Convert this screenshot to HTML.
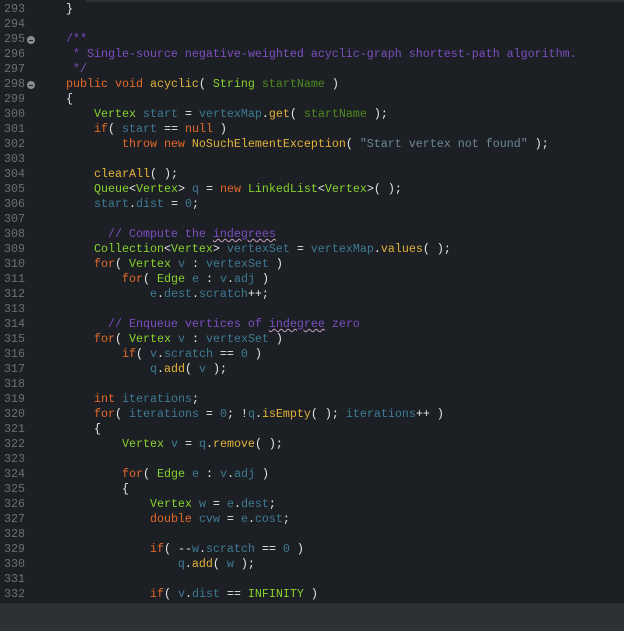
<!DOCTYPE html>
<html><head><meta charset="utf-8"><style>
html,body{margin:0;padding:0;width:624px;height:631px;overflow:hidden;background:#1c1f23;}
.top{position:absolute;left:86px;top:0;width:538px;height:2px;background:#2e3236;}
.bot{position:absolute;left:0;top:603px;width:624px;height:28px;background:#2d3135;}
.code{position:absolute;left:0;top:2px;width:624px;font-family:"Liberation Mono",monospace;font-size:11.67px;line-height:15px;color:#e6e6e6;}
.l{height:15px;position:relative;}
.n{position:absolute;left:4px;width:24px;color:#6b6f74;}
.c{position:absolute;left:66px;white-space:pre;}
.f{position:absolute;left:27px;top:4px;width:8px;height:8px;border-radius:50%;background:#8a8d90;}
.f:after{content:"";position:absolute;left:2px;top:3.5px;width:4px;height:1px;background:#1c1f23;}
.k{color:#e4692a}.t{color:#88d22e}.v{color:#3f7a94}.m{color:#e3b23a}.cm{color:#7c4fc0}.s{color:#6f8796}.p{color:#4f8a1e}
.u{text-decoration:underline wavy #c9a0c0;text-decoration-thickness:1px}
</style></head><body>
<div class="top"></div>
<div class="code">
<div class="l"><span class="n">293</span><span class="c">}</span></div>
<div class="l"><span class="n">294</span></div>
<div class="l"><span class="n">295</span><span class="f"></span><span class="c cm">/**</span></div>
<div class="l"><span class="n">296</span><span class="c cm"> * Single-source negative-weighted acyclic-graph shortest-path algorithm.</span></div>
<div class="l"><span class="n">297</span><span class="c cm"> */</span></div>
<div class="l"><span class="n">298</span><span class="f"></span><span class="c"><span class="k">public void </span><span class="m">acyclic</span>( <span class="t">String</span> <span class="p">startName</span> )</span></div>
<div class="l"><span class="n">299</span><span class="c">{</span></div>
<div class="l"><span class="n">300</span><span class="c">    <span class="t">Vertex</span> <span class="v">start</span> = <span class="v">vertexMap</span>.<span class="m">get</span>( <span class="p">startName</span> );</span></div>
<div class="l"><span class="n">301</span><span class="c">    <span class="k">if</span>( <span class="v">start</span> == <span class="k">null</span> )</span></div>
<div class="l"><span class="n">302</span><span class="c">        <span class="k">throw new </span><span class="m">NoSuchElementException</span>( <span class="s">"Start vertex not found"</span> );</span></div>
<div class="l"><span class="n">303</span></div>
<div class="l"><span class="n">304</span><span class="c">    <span class="m">clearAll</span>( );</span></div>
<div class="l"><span class="n">305</span><span class="c">    <span class="t">Queue</span>&lt;<span class="t">Vertex</span>&gt; <span class="v">q</span> = <span class="k">new </span><span class="t">LinkedList</span>&lt;<span class="t">Vertex</span>&gt;( );</span></div>
<div class="l"><span class="n">306</span><span class="c">    <span class="v">start</span>.<span class="v">dist</span> = <span class="v">0</span>;</span></div>
<div class="l"><span class="n">307</span></div>
<div class="l"><span class="n">308</span><span class="c cm">      // Compute the <span class="u">indegrees</span></span></div>
<div class="l"><span class="n">309</span><span class="c">    <span class="t">Collection</span>&lt;<span class="t">Vertex</span>&gt; <span class="v">vertexSet</span> = <span class="v">vertexMap</span>.<span class="m">values</span>( );</span></div>
<div class="l"><span class="n">310</span><span class="c">    <span class="k">for</span>( <span class="t">Vertex</span> <span class="v">v</span> : <span class="v">vertexSet</span> )</span></div>
<div class="l"><span class="n">311</span><span class="c">        <span class="k">for</span>( <span class="t">Edge</span> <span class="v">e</span> : <span class="v">v</span>.<span class="v">adj</span> )</span></div>
<div class="l"><span class="n">312</span><span class="c">            <span class="v">e</span>.<span class="v">dest</span>.<span class="v">scratch</span>++;</span></div>
<div class="l"><span class="n">313</span></div>
<div class="l"><span class="n">314</span><span class="c cm">      // Enqueue vertices of <span class="u">indegree</span> zero</span></div>
<div class="l"><span class="n">315</span><span class="c">    <span class="k">for</span>( <span class="t">Vertex</span> <span class="v">v</span> : <span class="v">vertexSet</span> )</span></div>
<div class="l"><span class="n">316</span><span class="c">        <span class="k">if</span>( <span class="v">v</span>.<span class="v">scratch</span> == <span class="v">0</span> )</span></div>
<div class="l"><span class="n">317</span><span class="c">            <span class="v">q</span>.<span class="m">add</span>( <span class="v">v</span> );</span></div>
<div class="l"><span class="n">318</span></div>
<div class="l"><span class="n">319</span><span class="c">    <span class="k">int</span> <span class="v">iterations</span>;</span></div>
<div class="l"><span class="n">320</span><span class="c">    <span class="k">for</span>( <span class="v">iterations</span> = <span class="v">0</span>; !<span class="v">q</span>.<span class="m">isEmpty</span>( ); <span class="v">iterations</span>++ )</span></div>
<div class="l"><span class="n">321</span><span class="c">    {</span></div>
<div class="l"><span class="n">322</span><span class="c">        <span class="t">Vertex</span> <span class="v">v</span> = <span class="v">q</span>.<span class="m">remove</span>( );</span></div>
<div class="l"><span class="n">323</span></div>
<div class="l"><span class="n">324</span><span class="c">        <span class="k">for</span>( <span class="t">Edge</span> <span class="v">e</span> : <span class="v">v</span>.<span class="v">adj</span> )</span></div>
<div class="l"><span class="n">325</span><span class="c">        {</span></div>
<div class="l"><span class="n">326</span><span class="c">            <span class="t">Vertex</span> <span class="v">w</span> = <span class="v">e</span>.<span class="v">dest</span>;</span></div>
<div class="l"><span class="n">327</span><span class="c">            <span class="k">double</span> <span class="v">cvw</span> = <span class="v">e</span>.<span class="v">cost</span>;</span></div>
<div class="l"><span class="n">328</span></div>
<div class="l"><span class="n">329</span><span class="c">            <span class="k">if</span>( --<span class="v">w</span>.<span class="v">scratch</span> == <span class="v">0</span> )</span></div>
<div class="l"><span class="n">330</span><span class="c">                <span class="v">q</span>.<span class="m">add</span>( <span class="v">w</span> );</span></div>
<div class="l"><span class="n">331</span></div>
<div class="l"><span class="n">332</span><span class="c">            <span class="k">if</span>( <span class="v">v</span>.<span class="v">dist</span> == <span class="t">INFINITY</span> )</span></div>
</div>
<div class="bot"></div>
</body></html>
